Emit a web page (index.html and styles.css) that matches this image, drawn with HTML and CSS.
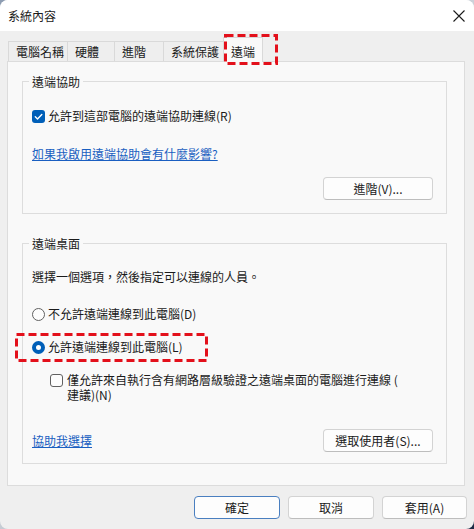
FILE: index.html
```html
<!DOCTYPE html>
<html lang="zh-Hant">
<head>
<meta charset="utf-8">
<title>系統內容</title>
<link rel="stylesheet" href="styles.css">
</head>
<body>
<div class="window">
  <div class="titlebar">
    <span class="title">系統內容</span>
    <svg class="close" width="12" height="12" viewBox="0 0 12 12"><path d="M0.5 0.5 L11.5 11.5 M11.5 0.5 L0.5 11.5" stroke="#1b1b1b" stroke-width="1.1" fill="none"/></svg>
  </div>
  <div class="tabs">
    <div class="tab">電腦名稱</div>
    <div class="tab">硬體</div>
    <div class="tab">進階</div>
    <div class="tab">系統保護</div>
    <div class="tab active">遠端
      <svg class="mark mark-tab" width="54" height="31" viewBox="0 0 54 31"><rect x="1.5" y="1.5" width="51" height="28" fill="none" stroke="#e3101b" stroke-width="3" stroke-dasharray="8 4"/></svg>
    </div>
  </div>
  <div class="panel">
    <fieldset class="group g1">
      <legend>遠端協助</legend>
      <div class="row check-row">
        <span class="box checked"><svg width="13" height="13" viewBox="0 0 13 13"><path d="M3.3 6.8 L5.5 8.9 L9.8 4.4" fill="none" stroke="#fff" stroke-width="1.4" stroke-linecap="round" stroke-linejoin="round"/></svg></span>
        <span>允許到這部電腦的遠端協助連線(R)</span>
      </div>
      <a class="link link-g1">如果我啟用遠端協助會有什麼影響?</a>
      <div class="btn-row">
        <button class="btn wide">進階(V)...</button>
      </div>
    </fieldset>
    <fieldset class="group g2">
      <legend>遠端桌面</legend>
      <div class="desc">選擇一個選項，然後指定可以連線的人員。</div>
      <div class="row radio-row r1">
        <span class="radio"></span>
        <span>不允許遠端連線到此電腦(D)</span>
      </div>
      <div class="row radio-row r2">
        <span class="radio on"></span>
        <span>允許遠端連線到此電腦(L)</span>
        <svg class="mark mark-radio" width="193" height="29" viewBox="0 0 193 29"><rect x="1.5" y="1.5" width="190" height="26" fill="none" stroke="#e3101b" stroke-width="3" stroke-dasharray="8 4"/></svg>
      </div>
      <div class="row nla">
        <span class="box"></span>
        <span class="nla-text">僅允許來自執行含有網路層級驗證之遠端桌面的電腦進行連線 (<br>建議)(N)</span>
      </div>
      <div class="bottom-row">
        <a class="link">協助我選擇</a>
        <button class="btn wide">選取使用者(S)...</button>
      </div>
    </fieldset>
  </div>
  <div class="footer">
    <button class="btn foot default">確定</button>
    <button class="btn foot">取消</button>
    <button class="btn foot last">套用(A)</button>
  </div>
</div>
</body>
</html>
```
FILE: styles.css
```css
* { box-sizing: border-box; }

html {
  height: 100%;
  background: linear-gradient(135deg, #8d9db2 0%, #cfd5dc 50%, #1c2a45 100%);
}

body {
  margin: 0;
  font-family: "Noto Sans CJK TC", "Microsoft JhengHei", sans-serif;
  font-size: 12px;
  color: #1b1b1b;
}

.window {
  width: 474px;
  height: 529px;
  border-radius: 8px;
  overflow: hidden;
  background: #efefef;
}

.titlebar {
  height: 31px;
  background: #ffffff;
  display: flex;
  align-items: center;
  justify-content: space-between;
  padding: 0 9px 0 8px;
}

.title { line-height: 16px; }
.close { display: block; }

.tabs {
  display: grid;
  grid-template-columns: 59px 47px 49px 60px 40px;
  align-items: end;
  height: 30px;
  padding: 6px 0 0 8px;
}

.tab {
  height: 20px;
  border-top: 1px solid #d9d9d9;
  border-left: 1px solid #d9d9d9;
  padding-left: 7px;
  line-height: 19px;
  white-space: nowrap;
  background: #eeeeee;
}

.tab.active {
  position: relative;
  z-index: 1;
  height: 25px;
  margin-bottom: -1px;
  padding-top: 4px;
  background: #f9f9f9;
  border-right: 1px solid #d9d9d9;
}

.mark { position: absolute; display: block; }
.mark-tab { left: 0px; top: -4px; }
.mark-radio { left: -17px; top: -6px; }

.panel {
  margin-left: 7px;
  width: 458px;
  border: 1px solid #dcdcdc;
  background: #f9f9f9;
  padding: 12px 0 21px 14px;
}

.group {
  margin: 0;
  width: 425px;
  min-width: 0;
  border: 1px solid #dddddd;
  padding: 0 13px 13px 9px;
}

.group legend {
  padding: 0 3px;
  margin-left: -3px;
  line-height: 15px;
}

.g2 { margin-top: 22px; padding-bottom: 11px; }

.row {
  display: flex;
  align-items: center;
  line-height: 16px;
  white-space: nowrap;
}

.check-row { margin-top: 19px; }

.box {
  width: 13px;
  height: 13px;
  flex: none;
  border: 1px solid #616161;
  border-radius: 3px;
  background: #fdfdfd;
  margin-right: 3px;
}

.box svg { display: block; }

.box.checked {
  border: 0;
  background: #005fb8;
}

.link {
  display: block;
  width: fit-content;
  line-height: 16px;
  color: #1a5fc1;
  text-decoration: underline;
  cursor: pointer;
}

.link-g1 { margin-top: 22px; }

.btn-row {
  display: flex;
  justify-content: flex-end;
  margin-top: 15px;
}

.btn {
  height: 23px;
  padding: 0;
  font-family: inherit;
  font-size: 12px;
  color: #1b1b1b;
  background: #fdfdfd;
  border: 1px solid #d3d3d3;
  border-bottom-color: #bdbdbd;
  border-radius: 4px;
}

.btn.wide { width: 110px; }

.desc { margin-top: 18px; line-height: 16px; }

.r1 { margin-top: 21px; }
.r2 { margin-top: 17px; position: relative; }

.radio {
  width: 13px;
  height: 13px;
  flex: none;
  border-radius: 50%;
  border: 1px solid #616161;
  background: #fdfdfd;
  margin-right: 3px;
}

.radio.on {
  border: 4px solid #005fb8;
  background: #ffffff;
}

.nla {
  margin-top: 17px;
  padding-left: 18px;
  align-items: flex-start;
  line-height: 15px;
}

.nla .box { margin-top: 2px; margin-right: 4px; }

.bottom-row {
  margin-top: 27px;
  display: flex;
  justify-content: space-between;
  align-items: center;
}

.footer {
  display: flex;
  justify-content: flex-end;
  gap: 8px;
  padding: 10px 7px 0 0;
}

.btn.foot { width: 86px; }
.btn.foot.last { width: 85px; }
.btn.default { border-color: #4a7fc0; }
```
